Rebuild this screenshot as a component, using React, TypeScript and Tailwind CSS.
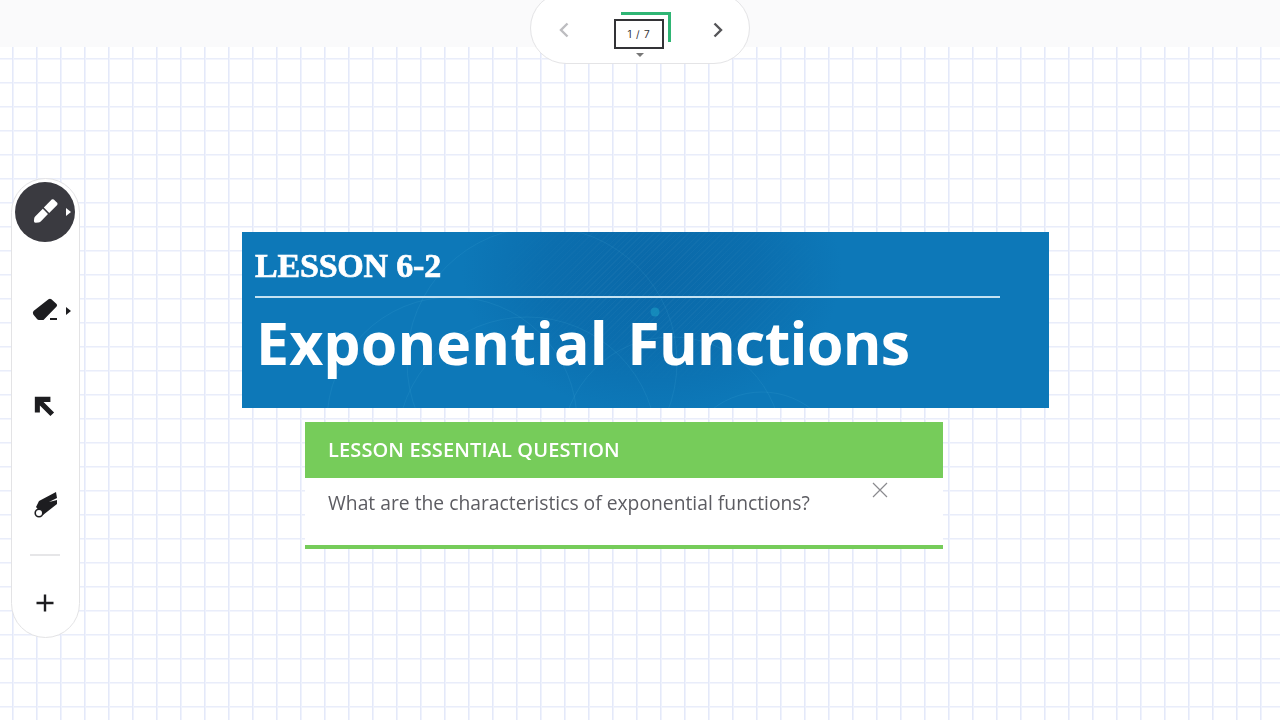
import React from "react";

function Banner() {
  return (
    <div className="relative w-[807px] h-[176px] ml-[242px] overflow-hidden bg-[#0d78b8] pl-[13px] pt-[14px]">
      <div className="absolute inset-0 bg-[radial-gradient(ellipse_190px_140px_at_410px_40px,#0a69a9_0%,#0b6eae_55%,#0d78b800_100%)]" />
      <div className="absolute inset-0 bg-[repeating-linear-gradient(135deg,#ffffff08_0px,#ffffff08_1px,#ffffff00_1px,#ffffff00_4px)] [mask-image:radial-gradient(ellipse_180px_110px_at_420px_50px,black_30%,transparent_100%)]" />
      <svg className="absolute inset-0" width="807" height="176" viewBox="0 0 807 176" fill="none">
        <g stroke="#4fb3d9" strokeOpacity="0.14" strokeWidth="1">
          <circle cx="300" cy="130" r="135" />
          <circle cx="210" cy="190" r="125" />
          <circle cx="285" cy="215" r="130" />
          <circle cx="430" cy="215" r="110" />
          <circle cx="520" cy="240" r="80" />
        </g>
        <circle cx="413" cy="80" r="4.5" fill="#1ea3c9" fillOpacity="0.55" />
      </svg>
      <div className="relative font-['Liberation_Serif',serif] font-bold text-white text-[34px] leading-[40px] h-[40px] tracking-[-0.2px] whitespace-nowrap [-webkit-text-stroke:0.7px_white] blur-[0.3px]">LESSON 6-2</div>
      <div className="relative w-[745px] h-[2px] mt-[10px] bg-[#c4e2f2]" />
      <div className="relative mt-[2px] ml-[1px] font-['Open_Sans',sans-serif] font-bold text-white text-[59px] leading-[84px] tracking-[0.1px] [word-spacing:4px] whitespace-nowrap blur-[0.4px]">Exponential <span className="tracking-[-0.7px]">Functions</span></div>
    </div>
  );
}

function EssentialCard() {
  return (
    <div className="relative w-[638px] ml-[305px] mt-[14px] bg-white font-['Open_Sans',sans-serif]">
      <div className="h-[56px] bg-[#76cc5a] pl-[23px] flex items-center text-white text-[20px] font-semibold tracking-[0.12px]"><span className="blur-[0.3px]">LESSON ESSENTIAL QUESTION</span></div>
      <div className="h-[67px] pl-[23px] pt-[9px] text-[#5c5c62] text-[19.3px] leading-[32px]"><span className="blur-[0.3px]">What are the characteristics of exponential functions?</span></div>
      <div className="h-[4px] bg-[#76cc5a]" />
      <svg className="absolute left-[567px] top-[60px]" width="16" height="16" viewBox="0 0 16 16" fill="none" stroke="#8a8a8e" strokeWidth="1.2">
        <path d="M1 1 L15 15 M15 1 L1 15" />
      </svg>
    </div>
  );
}

function PageNav() {
  return (
    <div className="absolute left-[530px] top-[-8px] w-[220px] h-[72px] rounded-full bg-white border border-[#e4e4e6] flex items-center justify-between pt-[3px] pl-[26px] pr-[24px]">
      <svg width="14" height="18" viewBox="0 0 14 18" fill="none" stroke="#bdbdc0" strokeWidth="2.4">
        <path d="M10.5 2.5 L4 9 L10.5 15.5" />
      </svg>
      <div className="relative w-[50px] h-[30px] mt-[9px] -ml-[4px]">
        <div className="absolute left-[7px] top-[-7px] w-[50px] h-[30px] border-t-[3px] border-r-[3px] border-[#2fb574]" />
        <div className="relative w-[50px] h-[30px] pt-[1px] border-[2.5px] border-[#333336] flex items-center justify-center font-['Inter',sans-serif] text-[10px] tracking-[0.8px] text-[#333336] bg-white">1 / 7</div>
        <div className="absolute left-[22px] top-[34px] w-0 h-0 border-l-[4px] border-r-[4px] border-t-[4px] border-l-transparent border-r-transparent border-t-[#777]" />
      </div>
      <svg width="14" height="18" viewBox="0 0 14 18" fill="none" stroke="#555558" strokeWidth="2.4">
        <path d="M3.5 2.5 L10 9 L3.5 15.5" />
      </svg>
    </div>
  );
}

function Toolbar() {
  return (
    <div className="absolute left-[11px] top-[178px] w-[69px] h-[460px] rounded-[36px] bg-white border border-[#e3e3e5] flex flex-col items-center pt-[3px] pr-[1px]">
      <div className="relative w-[60px] h-[60px] shrink-0 rounded-full bg-[#3a3a40] flex items-center justify-center">
        <svg width="31" height="31" viewBox="0 0 30 30" fill="#fff" className="-mt-[1px]">
          <path d="M21 3.5 Q22 2.8 23 3.5 L26.3 6.6 Q27.1 7.6 26.3 8.6 L18.6 16.4 L13.4 11.2 Z" />
          <path d="M12.4 12.4 L17.4 17.4 L10.4 24.6 Q9.4 25.6 8 25.6 L5.4 26 Q3.6 26 3.8 24 L4.1 21.6 Q4.2 20.4 5.2 19.6 Z" />
        </svg>
        <div className="absolute left-[51px] top-[26px] w-0 h-0 border-y-[4px] border-l-[5px] border-y-transparent border-l-white" />
      </div>
      <div className="relative mt-[51px] w-[60px] h-[36px] shrink-0 flex items-center justify-center">
        <svg width="30" height="26" viewBox="0 0 30 26" fill="#1d1d20">
          <path d="M3.5 13 L18.5 1.2 Q20 0.4 21.4 1.2 L26.6 6 Q27.6 7.2 26.6 8.4 L13.5 22 H9 Q7.8 22 7 21 L3.3 16.5 Q2.3 14.6 3.5 13 Z" />
          <rect x="20" y="20" width="7" height="2" />
        </svg>
        <div className="absolute left-[51px] top-[14px] w-0 h-0 border-y-[4px] border-l-[5px] border-y-transparent border-l-[#1d1d20]" />
      </div>
      <svg className="mt-[66px] -ml-[2px] shrink-0" width="22" height="22" viewBox="0 0 24 24" fill="#1d1d20">
        <path d="M2 2 H19 V7.5 H11.5 L23 19 L19 23 L7.5 11.5 V19 H2 Z" />
      </svg>
      <svg className="mt-[73px] shrink-0" width="26" height="28" viewBox="0 0 26 28" fill="#1d1d20">
        <path d="M24 2 L25 8 L17 12 L25 10 L25 14 L11 25 L4 17 L7 11 Z" />
        <circle cx="7" cy="23" r="3.8" fill="#fff" stroke="#1d1d20" strokeWidth="1.6" />
      </svg>
      <div className="mt-[36px] w-[30px] h-[2px] shrink-0 bg-[#e6e6e8]" />
      <svg className="mt-[38px] shrink-0" width="18" height="18" viewBox="0 0 18 18" fill="none" stroke="#1d1d20" strokeWidth="2.4">
        <path d="M9 0.5 V17.5 M0.5 9 H17.5" />
      </svg>
    </div>
  );
}

export default function App() {
  return (
    <div className="relative w-[1280px] h-[720px] overflow-hidden bg-white flex flex-col">
      <div className="h-[47px] shrink-0 bg-[#fafafb]" />
      <div className="flex-1 pt-[185px] bg-white bg-[linear-gradient(to_right,#e4e9f9_1px,#eff2fc_1px,#eff2fc_2px,transparent_2px),linear-gradient(to_bottom,#e9edfa_1px,#f3f5fd_1px,#f3f5fd_2px,transparent_2px)] bg-[size:24px_24px] bg-[position:12px_11px]">
        <Banner />
        <EssentialCard />
      </div>
      <PageNav />
      <Toolbar />
    </div>
  );
}
